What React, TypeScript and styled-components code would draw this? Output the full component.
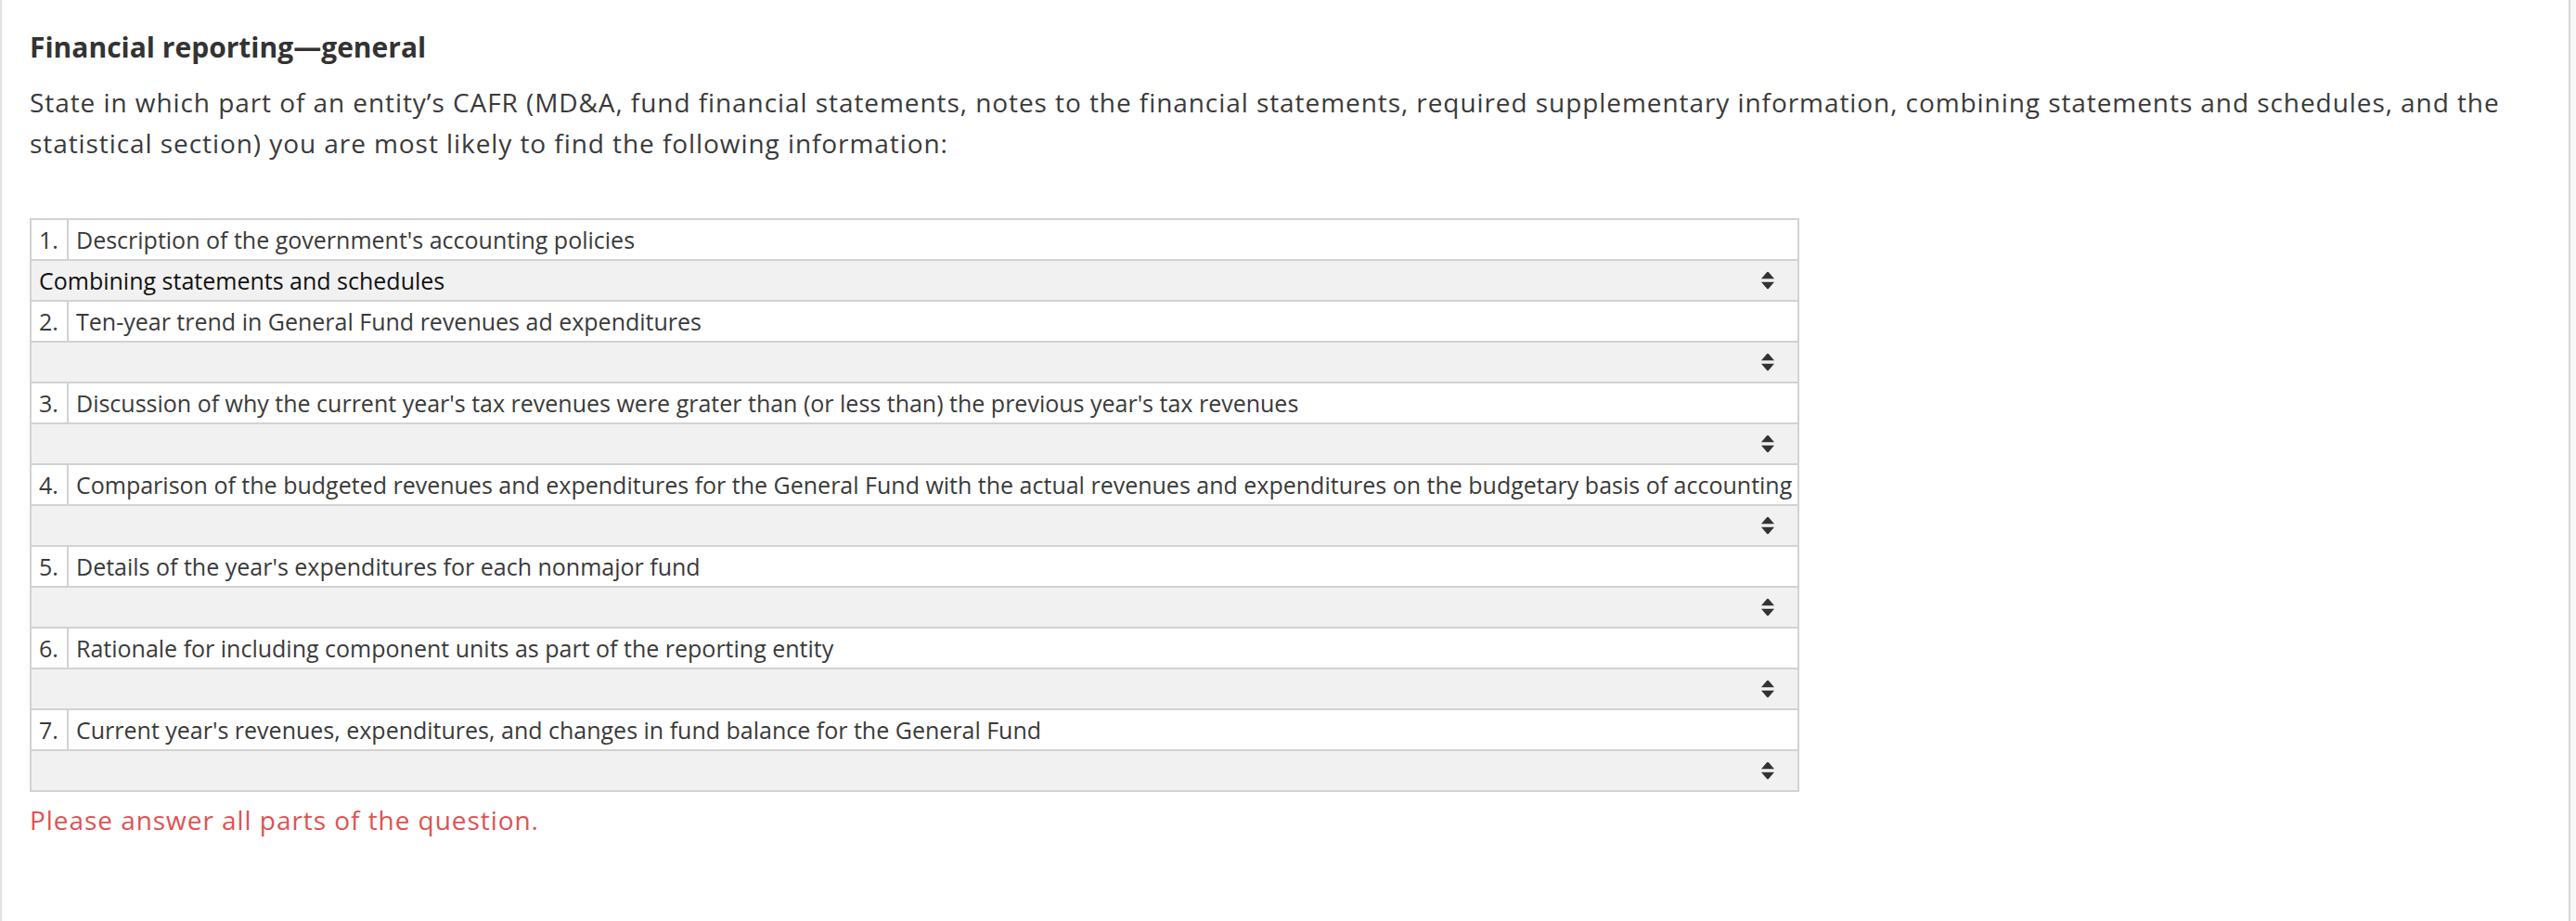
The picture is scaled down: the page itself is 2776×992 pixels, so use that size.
import React from 'react';
import styled, { createGlobalStyle } from 'styled-components';

const GlobalStyle = createGlobalStyle`
  html, body {
    margin: 0;
    padding: 0;
    background: #f7f7f9;
  }
  body {
    font-family: "Open Sans", "Noto Sans", Arial, sans-serif;
    color: #333;
  }
`;

const Page = styled.div`
  box-sizing: border-box;
  width: 2770px;
  min-height: 992px;
  background: #fff;
  border-left: 2px solid #e2e2e2;
  border-right: 2px solid #d6d6d6;
  padding: 28px 30px 0 30px;
`;

const Title = styled.h3`
  margin: 0;
  font-size: 30px;
  line-height: 45px;
  font-weight: 700;
  color: #333;
`;

const Prompt = styled.p`
  margin: 15px 0 0;
  font-size: 28px;
  line-height: 44px;
  letter-spacing: 0.93px;
  color: #3a3a3a;
`;

const Grid = styled.div`
  box-sizing: border-box;
  width: 1907px;
  margin-top: 59px;
  border: 2px solid #d2d2d2;
  border-bottom: none;
  font-size: 25px;
`;

const QuestionRow = styled.div`
  display: flex;
  height: 42px;
  border-bottom: 2px solid #d2d2d2;
  background: #fff;
  color: #3a3a3a;
`;

const Num = styled.div`
  box-sizing: border-box;
  width: 40px;
  padding-left: 8px;
  border-right: 2px solid #d2d2d2;
  line-height: 42px;
  flex-shrink: 0;
`;

const QuestionText = styled.div`
  padding-left: 8px;
  line-height: 42px;
  white-space: nowrap;
`;

const SelectRow = styled.div`
  display: flex;
  align-items: center;
  justify-content: space-between;
  height: 42px;
  padding: 0 24px 0 8px;
  border-bottom: 2px solid #d2d2d2;
  background: #f1f1f1;
  color: #111;
  line-height: 42px;
`;

const Error = styled.p`
  margin: 8px 0 0;
  font-size: 28px;
  line-height: 44px;
  letter-spacing: 0.95px;
  color: #e05252;
`;

const SortIcon = () => (
  <svg width="16" height="22" viewBox="0 0 16 22" aria-hidden>
    <path d="M1 9.2 L7 2.2 Q8 1.2 9 2.2 L15 9.2 Z" fill="#333" />
    <path d="M1 12.8 L7 19.8 Q8 20.8 9 19.8 L15 12.8 Z" fill="#333" />
  </svg>
);

const items: { text: string; answer: string }[] = [
  { text: "Description of the government's accounting policies", answer: 'Combining statements and schedules' },
  { text: 'Ten-year trend in General Fund revenues ad expenditures', answer: '' },
  {
    text: "Discussion of why the current year's tax revenues were grater than (or less than) the previous year's tax revenues",
    answer: '',
  },
  {
    text: 'Comparison of the budgeted revenues and expenditures for the General Fund with the actual revenues and expenditures on the budgetary basis of accounting',
    answer: '',
  },
  { text: "Details of the year's expenditures for each nonmajor fund", answer: '' },
  { text: 'Rationale for including component units as part of the reporting entity', answer: '' },
  { text: "Current year's revenues, expenditures, and changes in fund balance for the General Fund", answer: '' },
];

const App = () => {
  return (
    <>
      <GlobalStyle />
      <Page>
        <Title>Financial reporting—general</Title>
        <Prompt>
          State in which part of an entity’s CAFR (MD&amp;A, fund financial statements, notes to the financial
          statements, required supplementary information, combining statements and schedules, and the statistical
          section) you are most likely to find the following information:
        </Prompt>
        <Grid>
          {items.map((item, i) => (
            <React.Fragment key={i}>
              <QuestionRow>
                <Num>{i + 1}.</Num>
                <QuestionText>{item.text}</QuestionText>
              </QuestionRow>
              <SelectRow>
                <span>{item.answer}</span>
                <SortIcon />
              </SelectRow>
            </React.Fragment>
          ))}
        </Grid>
        <Error>Please answer all parts of the question.</Error>
      </Page>
    </>
  );
};

export default App;
